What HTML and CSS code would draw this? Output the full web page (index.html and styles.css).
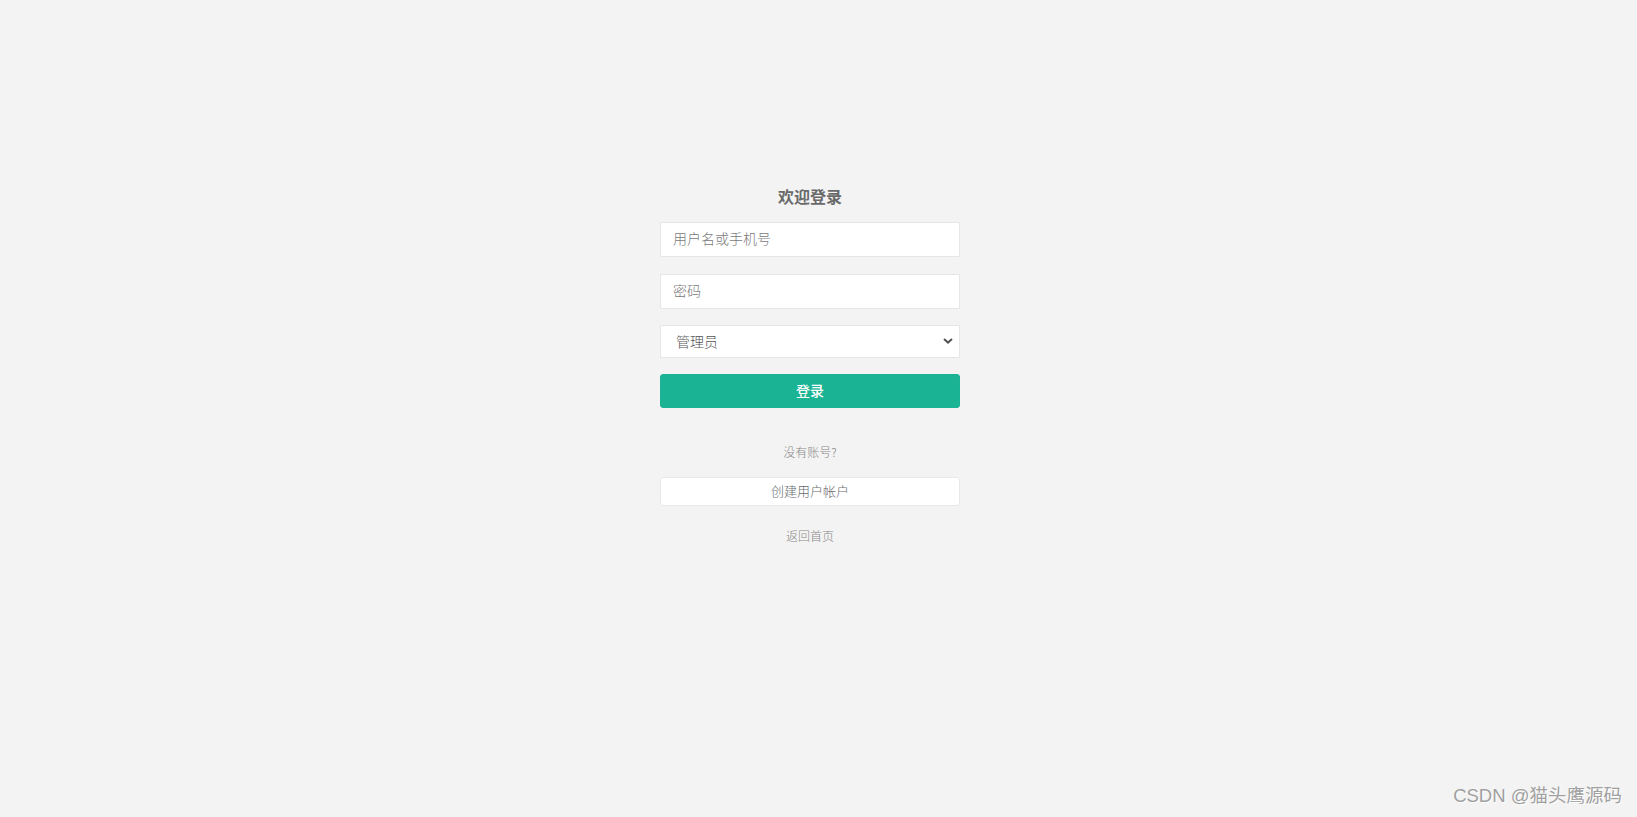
FILE: index.html
```html
<!DOCTYPE html>
<html lang="zh-CN">
<head>
<meta charset="utf-8">
<title>欢迎登录</title>
<link rel="stylesheet" href="styles.css">
</head>
<body>
<div class="page">
  <div class="login-box">
    <h3 class="title">欢迎登录</h3>
    <form class="login-form">
      <input class="field" type="text" placeholder="用户名或手机号">
      <input class="field field-pw" type="password" placeholder="密码">
      <div class="select-wrap">
        <select class="field field-select">
          <option>管理员</option>
          <option>用户</option>
        </select>
        <svg class="chevron" width="10" height="6" viewBox="0 0 10 6"><path d="M1 1 L5 4.6 L9 1" fill="none" stroke="#555" stroke-width="2"/></svg>
      </div>
      <button class="btn-primary" type="button">登录</button>
    </form>
    <p class="muted">没有账号?</p>
    <a class="btn-white" href="#">创建用户帐户</a>
    <p class="muted back">返回首页</p>
  </div>
</div>
<div class="watermark">CSDN @猫头鹰源码</div>
</body>
</html>
```
FILE: styles.css
```css
html, body {
  margin: 0;
  padding: 0;
  height: 100%;
  background: #f3f3f3;
  overflow: hidden;
}
body {
  font-family: "Open Sans", "Helvetica Neue", "Liberation Sans", "Noto Sans CJK SC", sans-serif;
  color: #676a6c;
  font-size: 13px;
}
.page {
  padding-right: 17px;
  padding-top: 186px;
}
.login-box {
  width: 300px;
  margin: 0 auto;
  display: flex;
  flex-direction: column;
  align-items: stretch;
  text-align: center;
}
.title {
  margin: 0;
  font-size: 16px;
  line-height: 20px;
  font-weight: 700;
  color: #6a6a6a;
  font-family: "Noto Sans CJK SC", sans-serif;
}
.login-form {
  margin-top: 16px;
  display: flex;
  flex-direction: column;
}
.field {
  box-sizing: border-box;
  width: 100%;
  height: 35px;
  margin: 0;
  border: 1px solid #e5e6e7;
  border-radius: 1px;
  background: #fff;
  padding: 0 12px 3px;
  font-size: 14px;
  color: #555;
  font-family: "Noto Sans CJK SC", sans-serif;
  font-weight: 300;
  outline: none;
}
.field::placeholder {
  color: #7a7a7a;
}
.field-pw {
  margin-top: 17px;
}
.select-wrap {
  position: relative;
  margin-top: 16px;
}
.field-select {
  display: block;
  height: 33px;
  padding-left: 15px;
  padding-bottom: 2px;
  -webkit-appearance: none;
  appearance: none;
  color: #555;
}
.chevron {
  position: absolute;
  right: 7px;
  top: 13px;
  pointer-events: none;
}
.btn-primary {
  margin-top: 16px;
  height: 34px;
  border: 1px solid #1ab394;
  border-radius: 3px;
  background: #1ab394;
  color: #fff;
  font-size: 14px;
  font-weight: 500;
  font-family: "Noto Sans CJK SC", sans-serif;
  padding: 0 0 2px;
}
.muted {
  margin: 35px 0 0;
  font-size: 12px;
  line-height: 17px;
  color: #888;
  font-weight: 300;
  font-family: "Noto Sans CJK SC", sans-serif;
}
.btn-white {
  box-sizing: border-box;
  display: block;
  margin-top: 17px;
  height: 29px;
  line-height: 26px;
  border: 1px solid #e7eaec;
  border-radius: 3px;
  background: #fff;
  color: #676a6c;
  font-size: 13px;
  font-weight: 300;
  text-decoration: none;
  font-family: "Noto Sans CJK SC", sans-serif;
}
.back {
  margin-top: 21px;
}
.watermark {
  position: absolute;
  right: 15px;
  bottom: 10px;
  font-family: "Liberation Sans", "Noto Sans CJK SC", sans-serif;
  font-size: 18.5px;
  color: #a0a0a0;
  text-shadow: 1px 1px 0 #fff;
}
```
